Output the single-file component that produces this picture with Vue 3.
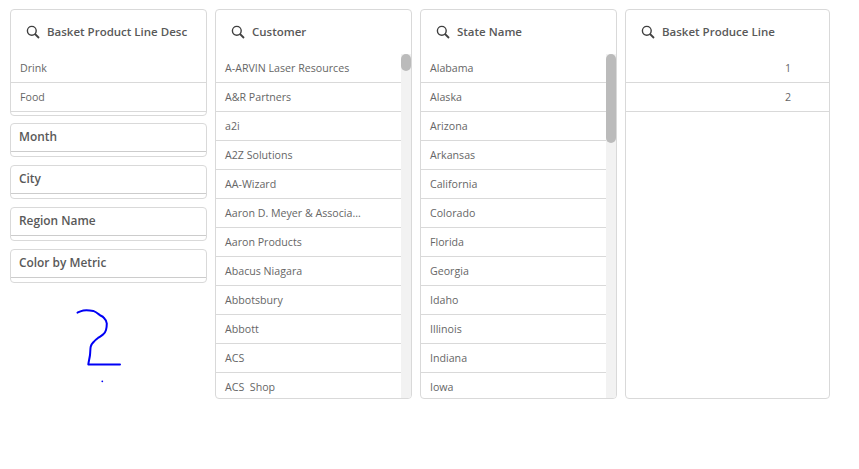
<script setup>
const customers = ['A-ARVIN Laser Resources','A&R Partners','a2i','A2Z Solutions','AA-Wizard','Aaron D. Meyer & Associa…','Aaron Products','Abacus Niagara','Abbotsbury','Abbott','ACS','ACS  Shop']
const states = ['Alabama','Alaska','Arizona','Arkansas','California','Colorado','Florida','Georgia','Idaho','Illinois','Indiana','Iowa']
const collapsed = ['Month','City','Region Name','Color by Metric']
</script>

<template>
  <div class="page">
    <div class="col-left">
      <section class="panel panel-short">
        <header class="head">
          <svg class="search" viewBox="0 0 14 14" width="14" height="14"><circle cx="5.8" cy="5.8" r="4.4" fill="none" stroke="#404040" stroke-width="1.4"/><path d="M9 9l4 4" stroke="#404040" stroke-width="1.8" fill="none"/></svg>
          <span>Basket Product Line Desc</span>
        </header>
        <div class="row">Drink</div>
        <div class="row">Food</div>
      </section>
      <section v-for="c in collapsed" :key="c" class="panel mini">
        <div class="mini-title">{{ c }}</div>
      </section>
      <svg class="sketch" width="60" height="90" viewBox="70 302 60 90">
        <path d="M77.5 312.7C79 312 81 310.8 83.3 310.4C87 310 90 310.3 93.3 310.9C96 311.8 98 313.6 100 315.2C102 316 103.4 316.8 104 318C106 320 106.8 321.5 106.8 323.5C106.8 326 106.6 328 106 330C105.4 332 104.6 333.2 103.3 334.3C101.8 335.8 100 336.6 98.3 337.7C96.5 339 94.6 340.6 93.3 342.3C92 343.6 91.2 345 90.7 346.7C90.3 349 90.3 352 90 355C89.6 358 88.8 361 88.3 364.5H120" fill="none" stroke="#0000f5" stroke-width="2" stroke-linejoin="round" stroke-linecap="round"/>
        <circle cx="102.3" cy="381.3" r="0.9" fill="#0000f5"/>
      </svg>
    </div>

    <section class="panel tall">
      <header class="head">
        <svg class="search" viewBox="0 0 14 14" width="14" height="14"><circle cx="5.8" cy="5.8" r="4.4" fill="none" stroke="#404040" stroke-width="1.4"/><path d="M9 9l4 4" stroke="#404040" stroke-width="1.8" fill="none"/></svg>
        <span>Customer</span>
      </header>
      <div class="list">
        <div class="rows">
          <div v-for="c in customers" :key="c" class="row">{{ c }}</div>
        </div>
        <div class="track"><div class="thumb thumb-small"></div></div>
      </div>
    </section>

    <section class="panel tall">
      <header class="head">
        <svg class="search" viewBox="0 0 14 14" width="14" height="14"><circle cx="5.8" cy="5.8" r="4.4" fill="none" stroke="#404040" stroke-width="1.4"/><path d="M9 9l4 4" stroke="#404040" stroke-width="1.8" fill="none"/></svg>
        <span>State Name</span>
      </header>
      <div class="list">
        <div class="rows">
          <div v-for="s in states" :key="s" class="row">{{ s }}</div>
        </div>
        <div class="track"><div class="thumb thumb-big"></div></div>
      </div>
    </section>

    <section class="panel tall wide">
      <header class="head">
        <svg class="search" viewBox="0 0 14 14" width="14" height="14"><circle cx="5.8" cy="5.8" r="4.4" fill="none" stroke="#404040" stroke-width="1.4"/><path d="M9 9l4 4" stroke="#404040" stroke-width="1.8" fill="none"/></svg>
        <span>Basket Produce Line</span>
      </header>
      <div class="row num">1</div>
      <div class="row num">2</div>
    </section>
  </div>
</template>

<style>
html, body { background: #fff; }
</style>

<style scoped>
.page {
  display: flex;
  gap: 8px;
  padding: 9px 0 0 10px;
  width: 859px;
  height: 469px;
  box-sizing: border-box;
  font-family: "Open Sans", "Noto Sans", sans-serif;
  overflow: hidden;
  background: #fff;
}
.col-left { width: 197px; display: flex; flex-direction: column; }
.panel {
  border: 1px solid #d9d9d9;
  border-radius: 4px;
  box-sizing: border-box;
  background: #fff;
  overflow: hidden;
}
.panel-short { height: 107px; margin-bottom: 7px; flex: none; }
.tall { width: 197px; height: 390px; display: flex; flex-direction: column; }
.wide { width: 205px; }
.head {
  height: 44px;
  box-sizing: border-box;
  padding: 0 0 1px 15px;
  flex: none;
  display: flex;
  align-items: center;
  gap: 7px;
  font-size: 11.5px;
  font-weight: 600;
  color: #595959;
  white-space: nowrap;
}
.search { flex: none; }
.row {
  height: 29px;
  box-sizing: border-box;
  border-bottom: 1px solid #d9d9d9;
  display: flex;
  align-items: center;
  padding: 0 0 1px 9px;
  font-size: 10.65px;
  color: #666;
  white-space: pre;
}
.num { justify-content: flex-end; padding: 0 38px 1px 0; }
.list { flex: 1; display: flex; min-height: 0; }
.rows { flex: 1; min-width: 0; overflow: hidden; }
.track { width: 10px; flex: none; background: #f2f2f2; }
.thumb { background: #bbb; border-radius: 5px; }
.thumb-small { height: 17px; }
.thumb-big { height: 89px; }
.mini {
  height: 34px;
  margin-bottom: 8px;
  flex: none;
}
.mini-title {
  height: 28px;
  box-sizing: border-box;
  border-bottom: 1px solid #ccc;
  padding-left: 8px;
  line-height: 24px;
  font-size: 11.9px;
  font-weight: 600;
  color: #595959;
}
.sketch { margin: 11px 0 0 60px; flex: none; }
</style>
